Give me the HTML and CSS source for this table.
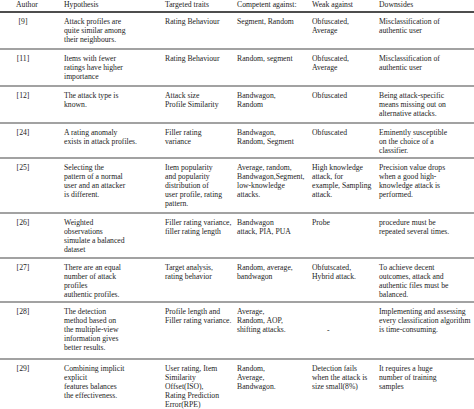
FILE: index.html
```html
<!DOCTYPE html>
<html>
<head>
<meta charset="utf-8">
<link rel="stylesheet" href="styles.css">
</head>
<body>
<table class="tbl">
  <colgroup>
    <col class="c1"><col class="c2"><col class="c3"><col class="c4"><col class="c5"><col class="c6">
  </colgroup>
  <thead>
    <tr class="head">
      <th class="auth-h">Author</th>
      <th>Hypothesis</th>
      <th>Targeted traits</th>
      <th>Competent against:</th>
      <th class="weak">Weak against</th>
      <th>Downsides</th>
    </tr>
  </thead>
  <tbody>
    <tr class="h37">
      <td class="auth">[9]</td>
      <td>Attack profiles are<br>quite similar among<br>their neighbours.</td>
      <td>Rating Behaviour</td>
      <td>Segment, Random</td>
      <td class="weak">Obfuscated,<br>Average</td>
      <td>Misclassification of<br>authentic user</td>
    </tr>
    <tr class="h37">
      <td class="auth">[11]</td>
      <td>Items with fewer<br>ratings have higher<br>importance</td>
      <td>Rating Behaviour</td>
      <td>Random, segment</td>
      <td class="weak">Obfuscated,<br>Average</td>
      <td>Misclassification of<br>authentic user</td>
    </tr>
    <tr class="h37">
      <td class="auth">[12]</td>
      <td>The attack type is<br>known.</td>
      <td>Attack size<br>Profile Similarity</td>
      <td>Bandwagon,<br>Random</td>
      <td class="weak">Obfuscated</td>
      <td>Being attack-specific<br>means missing out on<br>alternative attacks.</td>
    </tr>
    <tr class="h35">
      <td class="auth">[24]</td>
      <td>A rating anomaly<br>exists in attack profiles.</td>
      <td>Filler rating<br>variance</td>
      <td>Bandwagon,<br>Random, Segment</td>
      <td class="weak">Obfuscated</td>
      <td>Eminently susceptible<br>on the choice of a<br>classifier.</td>
    </tr>
    <tr class="h55">
      <td class="auth">[25]</td>
      <td>Selecting the<br>pattern of a normal<br>user and an attacker<br>is different.</td>
      <td>Item popularity<br>and popularity<br>distribution of<br>user profile, rating<br>pattern.</td>
      <td>Average, random,<br>Bandwagon,Segment,<br>low-knowledge<br>attacks.</td>
      <td class="weak">High knowledge<br>attack, for<br>example, Sampling<br>attack.</td>
      <td>Precision value drops<br>when a good high-<br>knowledge attack is<br>performed.</td>
    </tr>
    <tr class="h45">
      <td class="auth">[26]</td>
      <td>Weighted<br>observations<br>simulate a balanced<br>dataset</td>
      <td>Filler rating variance,<br>filler rating length</td>
      <td>Bandwagon<br>attack, PIA, PUA</td>
      <td class="weak">Probe</td>
      <td>procedure must be<br>repeated several times.</td>
    </tr>
    <tr class="h44">
      <td class="auth">[27]</td>
      <td>There are an equal<br>number of attack<br>profiles<br>authentic profiles.</td>
      <td>Target analysis,<br>rating behavior</td>
      <td>Random, average,<br>bandwagon</td>
      <td class="weak">Obfutscated,<br>Hybrid attack.</td>
      <td>To achieve decent<br>outcomes, attack and<br>authentic files must be<br>balanced.</td>
    </tr>
    <tr class="h57">
      <td class="auth">[28]</td>
      <td>The detection<br>method based on<br>the multiple-view<br>information gives<br>better results.</td>
      <td>Profile length and<br>Filler rating variance.</td>
      <td>Average,<br>Random, AOP,<br>shifting attacks.</td>
      <td class="weak dash">-</td>
      <td>Implementing and assessing<br>every classification algorithm<br>is time-consuming.</td>
    </tr>
    <tr class="last">
      <td class="auth">[29]</td>
      <td>Combining implicit<br>explicit<br>features balances<br>the effectiveness.</td>
      <td>User rating, Item<br>Similarity<br>Offset(ISO),<br>Rating Prediction<br>Error(RPE)</td>
      <td>Random,<br>Average,<br>Bandwagon.</td>
      <td class="weak">Detection fails<br>when the attack is<br>size small(8%)</td>
      <td>It requires a huge<br>number of training<br>samples</td>
    </tr>
  </tbody>
</table>
</body>
</html>
```
FILE: styles.css
```css
html, body {
  margin: 0;
  padding: 0;
  background: #ffffff;
}
body {
  width: 474px;
  height: 409px;
  overflow: hidden;
}
.tbl {
  width: 474px;
  table-layout: fixed;
  border-collapse: collapse;
  font-family: "Liberation Serif", "Times New Roman", serif;
  font-size: 7.7px;
  line-height: 9px;
  color: #1c1c1c;
}
.c1 { width: 64px; }
.c2 { width: 101px; }
.c3 { width: 72px; }
.c4 { width: 75px; }
.c5 { width: 67px; }
.c6 { width: 95px; }

.tbl th,
.tbl td {
  padding: 0;
  text-align: left;
  vertical-align: top;
  white-space: nowrap;
  overflow: visible;
  font-weight: normal;
}
.head th {
  height: 11px;
  border-bottom: 2px solid #4e4e4e;
}
.tbl tbody td {
  padding-top: 4px;
  border-bottom: 2px solid #a2a2a2;
}
.tbl tbody tr.last td {
  border-bottom: none;
}
.auth-h {
  padding-left: 16px !important;
}
.tbl td.auth {
  text-align: center;
  padding-right: 18px;
}
.tbl .weak {
  padding-left: 0;
}
.c5 + col { }
.h37 { height: 37px; }
.h35 { height: 35px; }
.h55 { height: 55px; }
.h45 { height: 45px; }
.h44 { height: 44px; }
.h57 { height: 57px; }
.last { height: 49px; }
.tbl td.dash {
  padding-top: 23px;
  padding-left: 15px;
}
```
